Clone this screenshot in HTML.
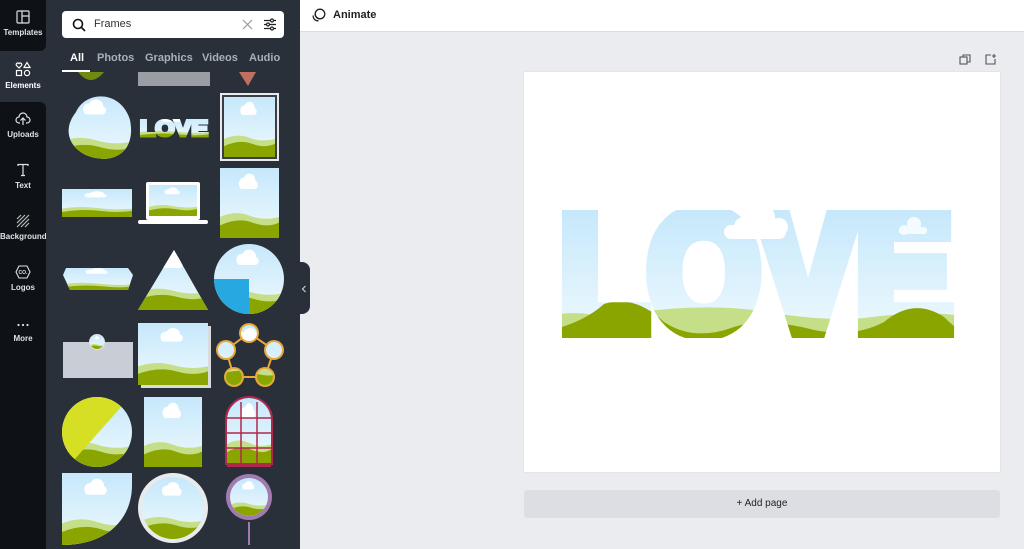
<!DOCTYPE html>
<html><head><meta charset="utf-8"><style>
*{margin:0;padding:0;box-sizing:border-box}
body{width:1024px;height:549px;overflow:hidden;font-family:"Liberation Sans",sans-serif;background:#ebecf0;position:relative}
.rail{position:absolute;left:0;top:0;width:46px;height:549px;background:#293039}
.ri{position:absolute;left:0;width:46px;height:51px;background:#0e1217;color:#dfe1e5;font-size:8px;font-weight:bold;text-align:center}
.ri svg{display:block;margin:10px auto 4px}
.panel{position:absolute;left:46px;top:0;width:254px;height:549px;background:#293039;overflow:hidden}
.search{position:absolute;left:62px;top:11px;width:222px;height:27px;background:#fff;border-radius:4px}
.tabs{position:absolute;top:52px;left:70px;font-size:11px;font-weight:bold;color:#aab0b8}
.tabs span{position:absolute;white-space:nowrap}
.top{position:absolute;left:300px;top:0;width:724px;height:32px;background:#fff;border-bottom:1px solid #dadce0}
.page{position:absolute;left:524px;top:72px;width:476px;height:400px;background:#fff;box-shadow:0 0 1px rgba(0,0,0,.15)}
.add{position:absolute;left:524px;top:490px;width:476px;height:28px;background:#dcdee3;border-radius:3px;font-size:10px;color:#222;text-align:center;line-height:28px}
.t{position:absolute}
</style></head><body>
<svg width="0" height="0" style="position:absolute">
<defs>
<linearGradient id="sky" x1="0" y1="0" x2="0" y2="1"><stop offset="0" stop-color="#c6e8fb"/><stop offset="1" stop-color="#eef9fe"/></linearGradient>
<symbol id="sc" viewBox="0 0 100 100" preserveAspectRatio="none">
<rect width="100" height="100" fill="url(#sky)"/>
<g fill="#fff"><circle cx="40" cy="22" r="8"/><circle cx="50" cy="18" r="10"/><circle cx="58" cy="24" r="6"/><rect x="33" y="22" width="30" height="8" rx="4"/></g>
<path d="M0 70 Q25 60 50 68 T100 70 V100 H0Z" fill="#c4df87"/>
<path d="M0 82 Q30 70 55 78 T100 78 V100 H0Z" fill="#8aa500"/>
</symbol>
</defs></svg>

<div class="rail">
<div class="ri" style="top:0;border-bottom-right-radius:6px"><svg width="14" height="14" viewBox="0 0 14 14" fill="none" stroke="#dfe1e5" stroke-width="1.2"><rect x="1" y="1" width="12" height="12" rx="1"/><path d="M6 1V13M6 6H13"/></svg>Templates</div>
<div class="ri" style="top:51px;background:#293039;color:#fff"><svg width="16" height="16" viewBox="0 0 16 16" fill="none" stroke="#fff" stroke-width="1.2"><path d="M4 7 1.5 4.5A1.5 1.5 0 0 1 4 2.6 1.5 1.5 0 0 1 6.5 4.5Z"/><path d="M12 1.5 15 6.5H9Z"/><rect x="1.5" y="9.5" width="5" height="5"/><circle cx="12" cy="12" r="2.6"/></svg>Elements</div>
<div class="ri" style="top:102px;border-top-right-radius:6px"><svg width="16" height="14" viewBox="0 0 16 14" fill="none" stroke="#dfe1e5" stroke-width="1.2"><path d="M5 11H4A3 3 0 0 1 4 5 4 4 0 0 1 12 5 3 3 0 0 1 12 11H11M8 13V6M5.5 8.5 8 6 10.5 8.5"/></svg>Uploads</div>
<div class="ri" style="top:153px"><svg width="14" height="14" viewBox="0 0 14 14" fill="none" stroke="#dfe1e5" stroke-width="1.2"><path d="M2 3V1.5H12V3M7 1.5V12.5M5 12.5H9"/></svg>Text</div>
<div class="ri" style="top:204px"><svg width="14" height="14" viewBox="0 0 14 14" stroke="#bbb" stroke-width="1.2"><path d="M1 5 5 1M1 9 9 1M1 13 13 1M5 13 13 5M9 13 13 9"/></svg>Background</div>
<div class="ri" style="top:255px"><svg width="16" height="14" viewBox="0 0 16 14" fill="none" stroke="#dfe1e5" stroke-width="1.1"><path d="M4 1H12L15 7 12 13H4L1 7Z"/><text x="8" y="9" font-size="5" fill="#dfe1e5" stroke="none" text-anchor="middle" font-family="Liberation Sans">CO.</text></svg>Logos</div>
<div class="ri" style="top:306px;height:243px"><svg width="14" height="14" viewBox="0 0 14 14" fill="#dfe1e5"><circle cx="2.5" cy="9" r="1.1"/><circle cx="7" cy="9" r="1.1"/><circle cx="11.5" cy="9" r="1.1"/></svg>More</div>
</div>

<div class="panel">
<svg width="254" height="549" style="position:absolute;left:0;top:0">
<path d="M32 72 Q45 88 58 72Z" fill="#6e8a10"/>
<rect x="92" y="72" width="72" height="14" fill="#9a9ea4"/>
<path d="M193 72 L210 72 L202 86Z" fill="#c07060"/>
<clipPath id="c1"><path d="M30 112 C40 90 75 90 84 120 C90 150 70 162 50 158 C30 155 12 135 30 112Z"/></clipPath>
<g clip-path="url(#c1)"><use href="#sc" x="14" y="94" width="72" height="68"/></g>
<mask id="m2"><rect width="254" height="549" fill="#000"/><text x="94" y="136" font-family="Liberation Sans" font-weight="bold" font-size="22" textLength="68" lengthAdjust="spacingAndGlyphs" fill="#fff" stroke="#fff" stroke-width="3">LOVE</text></mask>
<g mask="url(#m2)"><use href="#sc" x="92" y="114" width="72" height="26"/></g>
<rect x="174" y="93" width="59" height="68" fill="#e8eaec"/><rect x="176" y="95" width="55" height="64" fill="#3a3f46"/><use href="#sc" x="178" y="97" width="51" height="60"/>
<use href="#sc" x="16" y="189" width="70" height="28"/>
<rect x="100" y="182" width="54" height="38" rx="2" fill="#fff"/><use href="#sc" x="103" y="185" width="48" height="31"/><rect x="92" y="220" width="70" height="4" rx="2" fill="#fff"/>
<use href="#sc" x="174" y="168" width="59" height="70"/>
<clipPath id="c3"><path d="M17 275 L20 268 H82 L87 275 L82 290 H24Z"/></clipPath>
<g clip-path="url(#c3)"><use href="#sc" x="17" y="266" width="70" height="26"/></g>
<clipPath id="c4"><path d="M128 250 L162 310 H92Z"/></clipPath>
<g clip-path="url(#c4)"><use href="#sc" x="92" y="250" width="70" height="60"/></g>
<path d="M128 250 L121 262 H135Z" fill="#fff"/>
<clipPath id="c5"><circle cx="203" cy="279" r="35"/></clipPath>
<g clip-path="url(#c5)"><use href="#sc" x="168" y="244" width="70" height="70"/><rect x="168" y="279" width="35" height="35" fill="#27a8e0"/></g>
<rect x="17" y="342" width="70" height="36" fill="#c9ced6"/>
<circle cx="51" cy="342" r="8" fill="#e0e4e8"/><clipPath id="c6"><circle cx="51" cy="342" r="7"/></clipPath><g clip-path="url(#c6)"><use href="#sc" x="44" y="335" width="14" height="14"/></g>
<rect x="95" y="326" width="70" height="62" fill="#d8dadd"/><use href="#sc" x="92" y="323" width="70" height="62"/>
<g stroke="#e8a83a" stroke-width="2" fill="none"><path d="M203 333 L228 350 L219 377 L188 377 L180 350Z"/></g>
<g fill="#e8a83a"><circle cx="203" cy="333" r="10"/><circle cx="228" cy="350" r="10"/><circle cx="219" cy="377" r="10"/><circle cx="188" cy="377" r="10"/><circle cx="180" cy="350" r="10"/></g>
<clipPath id="c7"><circle cx="203" cy="333" r="8"/><circle cx="228" cy="350" r="8"/><circle cx="219" cy="377" r="8"/><circle cx="188" cy="377" r="8"/><circle cx="180" cy="350" r="8"/></clipPath>
<g clip-path="url(#c7)"><use href="#sc" x="170" y="323" width="68" height="64"/></g>
<clipPath id="c8"><circle cx="51" cy="432" r="35"/></clipPath>
<g clip-path="url(#c8)"><use href="#sc" x="16" y="397" width="70" height="70"/><path d="M16 397 H84 L28 460 L16 460Z" fill="#d7df24"/></g>
<use href="#sc" x="98" y="397" width="58" height="70"/>
<path d="M180 465 V420 A23 23 0 0 1 226 420 V465" fill="none" stroke="#b0294d" stroke-width="2"/>
<clipPath id="c9"><path d="M181 464 V420 A22 22 0 0 1 225 420 V464Z"/></clipPath>
<g clip-path="url(#c9)"><use href="#sc" x="181" y="398" width="44" height="66"/></g>
<g stroke="#b0294d" stroke-width="1.5"><path d="M195 402 V464 M211 402 V464 M181 418 H225 M181 433 H225 M181 448 H225"/></g>
<rect x="181" y="463" width="44" height="4" fill="#b0294d"/>
<clipPath id="c10"><path d="M16 473 H86 V485 C86 520 60 545 16 545Z"/></clipPath>
<g clip-path="url(#c10)"><use href="#sc" x="16" y="473" width="70" height="72"/></g>
<circle cx="127" cy="508" r="35" fill="#e8eaec"/>
<clipPath id="c11"><circle cx="127" cy="508" r="31"/></clipPath><g clip-path="url(#c11)"><use href="#sc" x="96" y="477" width="62" height="62"/></g>
<path d="M203 522 L203 545" stroke="#a07bb0" stroke-width="2"/>
<circle cx="203" cy="497" r="23" fill="#a07bb0"/>
<clipPath id="c12"><circle cx="203" cy="497" r="19"/></clipPath><g clip-path="url(#c12)"><use href="#sc" x="184" y="478" width="38" height="38"/></g>
</svg>
<div class="search" style="left:16px">
<svg class="t" style="left:10px;top:7px" width="14" height="14" viewBox="0 0 14 14" fill="none" stroke="#111" stroke-width="1.6"><circle cx="6" cy="6" r="4.5"/><path d="M9.5 9.5 13 13"/></svg>
<span class="t" style="left:32px;top:7px;font-size:11px;color:#333">Frames</span>
<svg class="t" style="left:180px;top:8px" width="11" height="11" viewBox="0 0 11 11" stroke="#999" stroke-width="1.2"><path d="M1 1 10 10M10 1 1 10"/></svg>
<svg class="t" style="left:201px;top:7px" width="14" height="13" viewBox="0 0 14 13" fill="none" stroke="#222" stroke-width="1.2"><path d="M1 2.5H13M1 6.5H13M1 10.5H13"/><circle cx="9" cy="2.5" r="1.5" fill="#fff"/><circle cx="5" cy="6.5" r="1.5" fill="#fff"/><circle cx="9" cy="10.5" r="1.5" fill="#fff"/></svg>
</div>
<div class="tabs" style="left:24px"><span style="left:0;color:#fff">All</span><span style="left:27px">Photos</span><span style="left:75px">Graphics</span><span style="left:132px">Videos</span><span style="left:179px">Audio</span></div>
<div class="t" style="left:16px;top:70px;width:28px;height:2px;background:#fff"></div>
</div>
<div class="t" style="left:300px;top:262px;width:10px;height:52px;background:#293039;border-radius:0 8px 8px 0"></div>
<svg class="t" style="left:301px;top:285px" width="6" height="8" viewBox="0 0 6 8" fill="none" stroke="#ccc" stroke-width="1.2"><path d="M4.5 1 1.5 4 4.5 7"/></svg>

<div class="top">
<svg class="t" style="left:11px;top:8px" width="15" height="15" viewBox="0 0 15 15" fill="none" stroke="#222" stroke-width="1.3"><circle cx="9" cy="6" r="4.8"/><path d="M4.2 5.5A4.8 4.8 0 0 0 9.5 10.8M2.2 7.5A4.8 4.8 0 0 0 7.5 12.8"/></svg>
<span class="t" style="left:33px;top:9px;font-size:11px;font-weight:bold;color:#222">Animate</span>
</div>
<svg class="t" style="left:959px;top:54px" width="12" height="12" viewBox="0 0 12 12" fill="none" stroke="#555" stroke-width="1.1"><rect x="1" y="3" width="7" height="7"/><path d="M4 3V1H11V8H8"/></svg>
<svg class="t" style="left:985px;top:53px" width="12" height="12" viewBox="0 0 12 12" fill="none" stroke="#555" stroke-width="1.1"><path d="M6 2H1V11H10V6M9 1V5M7 3H11"/></svg>
<div class="page">
<svg width="476" height="400">
<mask id="lv"><rect width="476" height="400" fill="#000"/><text x="36" y="258" font-family="Liberation Sans" font-weight="bold" font-size="168" textLength="392" lengthAdjust="spacingAndGlyphs" fill="#fff" stroke="#fff" stroke-width="18" stroke-linejoin="miter">LOVE</text></mask>
<g mask="url(#lv)">
<rect x="27" y="138" width="411" height="128" fill="url(#sky)"/>
<g fill="#fff"><circle cx="220" cy="155" r="10"/><circle cx="236" cy="146" r="15"/><circle cx="255" cy="155" r="9"/><rect x="200" y="153" width="62" height="14" rx="7"/></g>
<g fill="#fff" opacity=".8"><circle cx="390" cy="152" r="7"/><circle cx="380" cy="158" r="5"/><rect x="375" y="155" width="28" height="7" rx="3"/></g>
<path d="M27 243 Q60 238 80 246 Q160 230 230 238 Q300 250 340 246 Q400 238 438 244 V266 H27Z" fill="#c4df87"/>
<path d="M27 258 Q60 250 80 232 Q110 222 140 250 Q170 270 210 255 Q240 245 290 258 Q330 266 360 250 Q390 225 420 245 Q430 255 438 260 V266 H27Z" fill="#8aa500"/>
</g>
</svg>
</div>
<div class="add">+ Add page</div>
</body></html>
